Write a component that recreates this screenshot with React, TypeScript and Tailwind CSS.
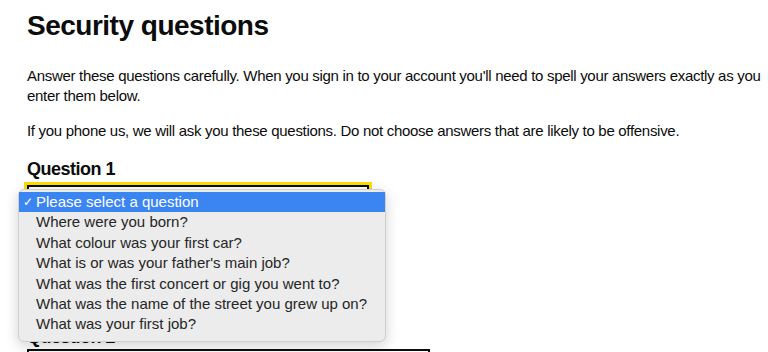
const questions = [
  'Please select a question',
  'Where were you born?',
  'What colour was your first car?',
  "What is or was your father's main job?",
  'What was the first concert or gig you went to?',
  'What was the name of the street you grew up on?',
  'What was your first job?',
];

function QuestionMenu() {
  return (
    <div className="absolute left-[-9px] top-[4px] z-10 w-[368px] rounded-[6px] border border-[#cfcfcf] bg-[#ececec] pt-[2px] pb-[6px] shadow-[0_4px_14px_rgba(0,0,0,0.18)] font-['Liberation_Sans',Arial,sans-serif] text-[15px]">
      {questions.map((q, i) => (
        <div
          key={q}
          className={
            i === 0
              ? 'flex h-[20.4px] items-center bg-[#3a85f2] text-white'
              : 'flex h-[20.4px] items-center text-[#262626]'
          }
        >
          <span className="w-[17px] pl-[4px] text-[12px]">{i === 0 ? '✓' : ''}</span>
          <span>{q}</span>
        </div>
      ))}
    </div>
  );
}

export default function App() {
  return (
    <div className="min-h-screen overflow-hidden bg-white text-[#0b0c0c] font-['Liberation_Sans',Arial,sans-serif]">
      <div className="h-[352px] pl-[27px] pr-[3px] pt-[8px]">
        <h1 className="text-[28px] font-bold leading-[36px] tracking-[-0.5px]">Security questions</h1>

        <p className="mt-[22px] text-[15px] leading-[20px] tracking-[-0.3px]">
          Answer these questions carefully. When you sign in to your account you'll need to spell your answers exactly as you enter them below.
        </p>
        <p className="mt-[15px] text-[15px] leading-[20px] tracking-[-0.3px]">
          If you phone us, we will ask you these questions. Do not choose answers that are likely to be offensive.
        </p>

        <div className="mt-[18px]">
          <label className="block text-[18px] font-bold leading-[20px] tracking-[-0.5px]">Question 1</label>
          <div className="relative mt-[6px] w-[342px]">
            <div className="h-[40px] w-[342px] border-2 border-[#0b0c0c] outline-3 outline-[#ffdd00]" />
            <QuestionMenu />
          </div>
        </div>

        <div className="mt-[15px]">
          <div className="h-[20px]" />
          <div className="mt-[6px] h-[40px] w-[320px] border-2 border-[#0b0c0c]" />
        </div>

        <div className="mt-[21px]">
          <label className="block text-[18px] font-bold leading-[20px] tracking-[-0.5px]">Question 2</label>
          <div className="mt-[2px] h-[40px] w-[403px] border-2 border-[#0b0c0c]" />
        </div>
      </div>
    </div>
  );
}
